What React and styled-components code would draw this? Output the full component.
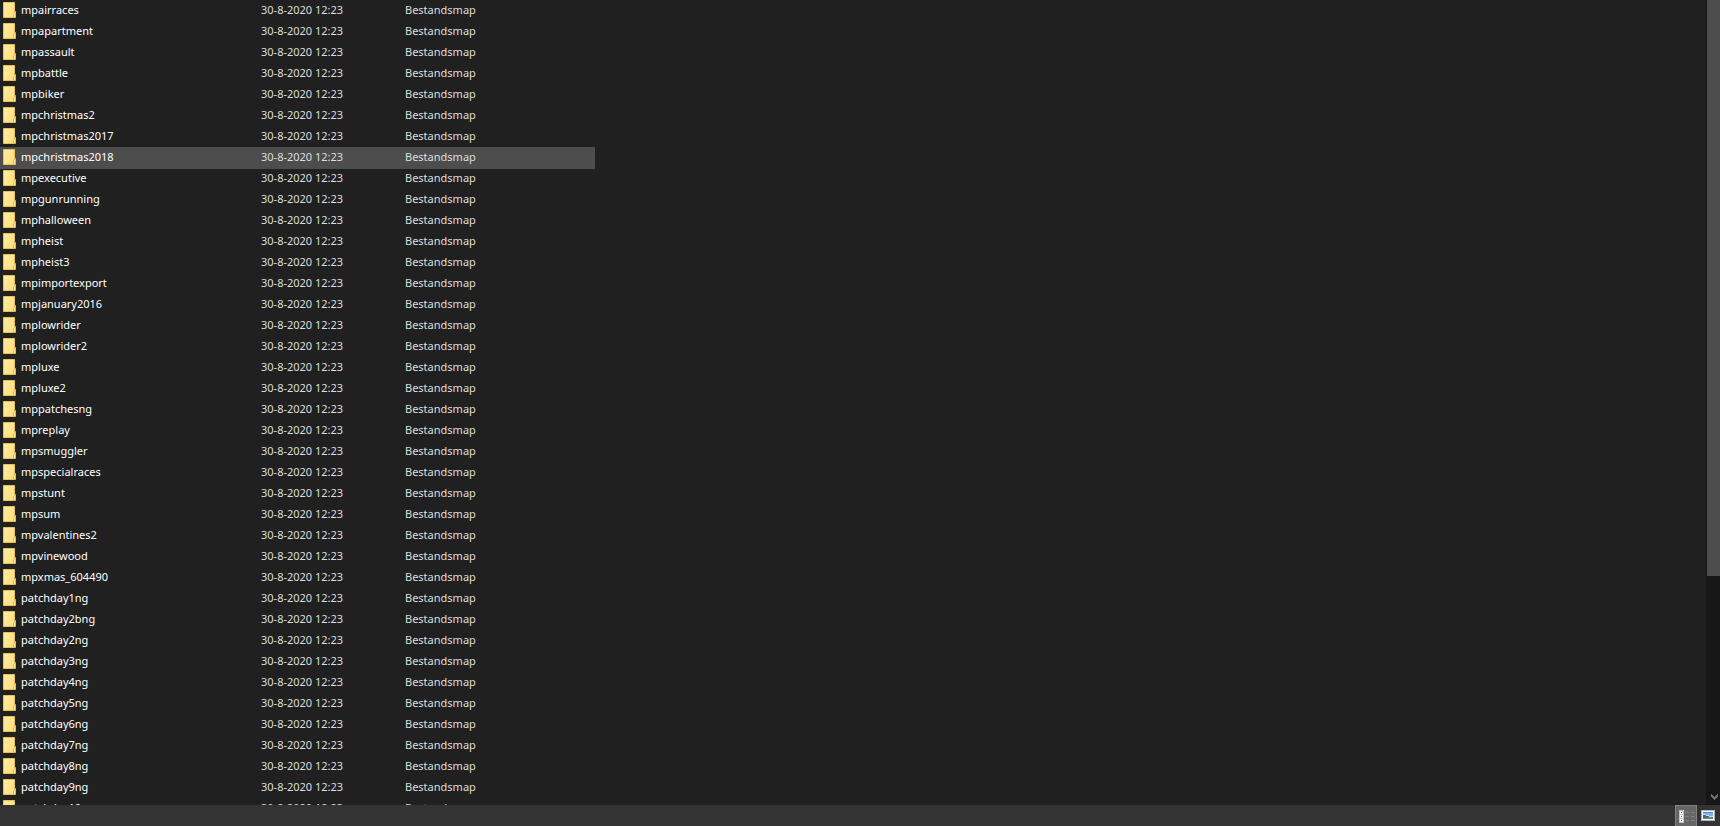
import React from "react";
import styled, { createGlobalStyle } from "styled-components";

const GlobalStyle = createGlobalStyle`
  *, *::before, *::after { box-sizing: border-box; }
  body {
    margin: 0;
    background: #202020;
    font-family: "Noto Sans", "Open Sans", sans-serif;
    font-size: 11px;
    line-height: 19px;
  }
`;

const Window = styled.div`
  display: flex;
  flex-direction: column;
  height: 100vh;
  overflow: hidden;
`;

const Content = styled.main`
  display: flex;
  flex: 1;
  min-height: 0;
`;

const ListPane = styled.div`
  flex: 1;
  min-width: 0;
  overflow: hidden;
`;

const FileTable = styled.table`
  width: 595px;
  table-layout: fixed;
  border-collapse: collapse;
`;

const Column = styled.col`
  width: ${(p) => p.$width};
`;

const Row = styled.tr`
  height: 21px;
  background: ${(p) => (p.$selected ? "#4d4d4d" : "transparent")};
  box-shadow: ${(p) => (p.$selected ? "0 1px 0 #4d4d4d" : "none")};
`;

const Cell = styled.td`
  padding: 0;
  color: #dedede;
  vertical-align: top;
  white-space: nowrap;
`;

const FileName = styled.div`
  display: flex;
  align-items: flex-start;
  gap: 5px;
  padding-left: 3px;
  color: #ffffff;

  svg { margin-top: 2px; }
`;

const Scrollbar = styled.div`
  display: flex;
  flex-direction: column;
  justify-content: space-between;
  width: 14px;
  padding-left: 1px;
  background: #171717;
`;

const Thumb = styled.div`
  height: calc(100% * 576 / 805);
  background: #4d4d4d;
`;

const ScrollButton = styled.button`
  display: flex;
  align-items: center;
  justify-content: center;
  height: 17px;
  padding: 0 0 0 2px;
  border: 0;
  background: transparent;
`;

const StatusBar = styled.footer`
  display: flex;
  justify-content: flex-end;
  height: 21px;
  padding-right: 1px;
  background: #333333;
`;

const ViewButton = styled.button`
  display: flex;
  align-items: flex-start;
  justify-content: center;
  width: 22px;
  padding: ${(p) => (p.$active ? "4px 0 0 2px" : "5px 0 0")};
  border: ${(p) => (p.$active ? "1px solid #838383" : "0")};
  border-bottom: 0;
  background: ${(p) => (p.$active ? "#666666" : "transparent")};
`;

const FolderIcon = () => (
  <svg width="13" height="16" viewBox="0 0 13 16" aria-hidden="true">
    <defs>
      <linearGradient id="folder" x1="0" y1="0" x2="1" y2="1">
        <stop offset="0" stopColor="#ffeaa2" />
        <stop offset="1" stopColor="#ffdf7d" />
      </linearGradient>
    </defs>
    <path d="M.5.5h11v15H.5z" fill="url(#folder)" stroke="#e9c250" />
    <path d="M10.5 15.5v-4l1-1v-1h1v6z" fill="#ffe898" stroke="#e5bb43" />
  </svg>
);

const ChevronIcon = () => (
  <svg width="7" height="6" viewBox="0 0 7 6" aria-hidden="true">
    <path d="M0 0h1v1h1v1h1v1h1V2h1V1h1V0h1v3H6v1H5v1H4v1H3V5H2V4H1V3H0z" fill="#707070" />
  </svg>
);

const DetailsIcon = () => (
  <svg width="16" height="13" viewBox="0 0 16 13" shapeRendering="crispEdges" aria-hidden="true">
    <path d="M0 0h5v13H0z" fill="#c4c4c4" />
    <path d="M1 1h3v3H1zM1 5h3v3H1zM1 9h3v3H1z" fill="#ffffff" />
    <path d="M2 2h1v1H2z" fill="#626262" />
    <path d="M2 6h1v1H2z" fill="#3f7fc0" />
    <path d="M2 10h1v1H2z" fill="#c02020" />
    <path d="M6 2h4v1H6zM12 2h4v1h-4zM6 6h4v1H6zM12 6h4v1h-4zM6 10h4v1H6zM12 10h4v1h-4z" fill="#808080" />
  </svg>
);

const PictureIcon = () => (
  <svg width="14" height="11" viewBox="0 0 14 11" shapeRendering="crispEdges" aria-hidden="true">
    <path d="M0 0h14v11H0z" fill="#b8b6b2" />
    <path d="M1 1h12v9H1z" fill="#ffffff" />
    <path d="M2 2h10v7H2z" fill="#79b4ef" />
    <path d="M2 2h10v1H2z" fill="#4c90e8" />
    <path d="M2 4h3v1h3v1h4v1H2z" fill="#c3dfef" />
    <path d="M2 5h3v1h3v1h4v1H2z" fill="#496d56" />
    <path d="M2 8h5V7h5v2H2z" fill="#5a89aa" />
  </svg>
);

const folders = [
  "mpairraces", "mpapartment", "mpassault", "mpbattle", "mpbiker",
  "mpchristmas2", "mpchristmas2017", "mpchristmas2018", "mpexecutive",
  "mpgunrunning", "mphalloween", "mpheist", "mpheist3", "mpimportexport",
  "mpjanuary2016", "mplowrider", "mplowrider2", "mpluxe", "mpluxe2",
  "mppatchesng", "mpreplay", "mpsmuggler", "mpspecialraces", "mpstunt",
  "mpsum", "mpvalentines2", "mpvinewood", "mpxmas_604490", "patchday1ng",
  "patchday2bng", "patchday2ng", "patchday3ng", "patchday4ng",
  "patchday5ng", "patchday6ng", "patchday7ng", "patchday8ng",
  "patchday9ng", "patchday10ng",
];

export default function App() {
  return (
    <Window>
      <GlobalStyle />
      <Content>
        <ListPane>
          <FileTable>
            <colgroup>
              <Column $width="261px" />
              <Column $width="144px" />
              <Column $width="190px" />
            </colgroup>
            <tbody>
              {folders.map((name) => (
                <Row key={name} $selected={name === "mpchristmas2018"}>
                  <Cell>
                    <FileName>
                      <FolderIcon />
                      {name}
                    </FileName>
                  </Cell>
                  <Cell>30-8-2020 12:23</Cell>
                  <Cell>Bestandsmap</Cell>
                </Row>
              ))}
            </tbody>
          </FileTable>
        </ListPane>
        <Scrollbar>
          <Thumb />
          <ScrollButton type="button" aria-label="Omlaag">
            <ChevronIcon />
          </ScrollButton>
        </Scrollbar>
      </Content>
      <StatusBar>
        <ViewButton type="button" $active aria-label="Details">
          <DetailsIcon />
        </ViewButton>
        <ViewButton type="button" aria-label="Grote pictogrammen">
          <PictureIcon />
        </ViewButton>
      </StatusBar>
    </Window>
  );
}
